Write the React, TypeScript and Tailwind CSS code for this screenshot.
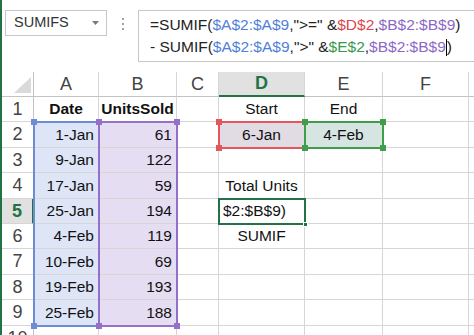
import clsx from 'clsx'

const GRID_COLS = 'grid-cols-[32px_65px_78px_42px_86px_78px_86px_1fr]'
const GRID_ROWS = 'grid-rows-[25px_25px_26px_25px_26px_25px_25px_26px_25px_26px_25px]'

type Align = 'left' | 'center' | 'right'
interface CellData {
  text?: string
  align?: Align
  bold?: boolean
  bg?: string
}

const BLUE_BG = 'bg-[#dde5f7]'
const PURPLE_BG = 'bg-[#e5ddf2]'

// sheet rows 1..10, columns A..G
const sheet: CellData[][] = [
  [
    { text: 'Date', align: 'center', bold: true },
    { text: 'UnitsSold', align: 'center', bold: true },
    {},
    { text: 'Start', align: 'center' },
    { text: 'End', align: 'center' },
    {},
    {},
  ],
  [
    { text: '1-Jan', align: 'right', bg: BLUE_BG },
    { text: '61', align: 'right', bg: PURPLE_BG },
    {},
    { text: '6-Jan', align: 'center', bg: 'bg-[#e1dce3]' },
    { text: '4-Feb', align: 'center', bg: 'bg-[#d6e4e2]' },
    {},
    {},
  ],
  [
    { text: '9-Jan', align: 'right', bg: BLUE_BG },
    { text: '122', align: 'right', bg: PURPLE_BG },
    {}, {}, {}, {}, {},
  ],
  [
    { text: '17-Jan', align: 'right', bg: BLUE_BG },
    { text: '59', align: 'right', bg: PURPLE_BG },
    {},
    { text: 'Total Units', align: 'center' },
    {}, {}, {},
  ],
  [
    { text: '25-Jan', align: 'right', bg: BLUE_BG },
    { text: '194', align: 'right', bg: PURPLE_BG },
    {},
    { text: '$2:$B$9)', align: 'left' },
    {}, {}, {},
  ],
  [
    { text: '4-Feb', align: 'right', bg: BLUE_BG },
    { text: '119', align: 'right', bg: PURPLE_BG },
    {},
    { text: 'SUMIF', align: 'center' },
    {}, {}, {},
  ],
  [
    { text: '10-Feb', align: 'right', bg: BLUE_BG },
    { text: '69', align: 'right', bg: PURPLE_BG },
    {}, {}, {}, {}, {},
  ],
  [
    { text: '19-Feb', align: 'right', bg: BLUE_BG },
    { text: '193', align: 'right', bg: PURPLE_BG },
    {}, {}, {}, {}, {},
  ],
  [
    { text: '25-Feb', align: 'right', bg: BLUE_BG },
    { text: '188', align: 'right', bg: PURPLE_BG },
    {}, {}, {}, {}, {},
  ],
  [{}, {}, {}, {}, {}, {}, {}],
]

// G is only a sliver at the right edge, so its letter is not shown
const letters = ['A', 'B', 'C', 'D', 'E', 'F', '']

function Cell({ text, align = 'left', bold, bg }: CellData) {
  return (
    <div
      className={clsx(
        'flex items-center whitespace-nowrap border-r border-b border-[#d6d6d6] px-[4px] text-[15.5px] text-[#111]',
        align === 'right' && 'justify-end',
        align === 'center' && 'justify-center',
        align === 'left' && 'justify-start',
        bold && 'font-bold',
        bg
      )}
    >
      {text}
    </div>
  )
}

function Handle({ pos, color }: { pos: 'tl' | 'tr' | 'bl' | 'br'; color: string }) {
  return (
    <span
      className={clsx(
        'absolute h-[6px] w-[6px]',
        pos === 'tl' && '-left-[4px] -top-[4px]',
        pos === 'tr' && '-right-[4px] -top-[4px]',
        pos === 'bl' && '-left-[4px] -bottom-[4px]',
        pos === 'br' && '-right-[4px] -bottom-[4px]',
        color
      )}
    />
  )
}

function FormulaBar() {
  const blue = 'text-[#4f7fd8]'
  const red = 'text-[#e0454b]'
  const purple = 'text-[#8b68c6]'
  const green = 'text-[#36984a]'
  return (
    <div className="flex h-[72px] shrink-0 items-start pt-[10px]">
      {/* name box */}
      <div className="ml-[3px] flex h-[26px] w-[102px] items-center justify-between border border-[#c6c6c6] pl-[8px] pr-[7px] text-[14.5px] text-[#333]">
        <span>SUMIFS</span>
        <svg width="7" height="4" viewBox="0 0 7 4">
          <path d="M0 0h7L3.5 4z" fill="#7a7a7a" />
        </svg>
      </div>
      {/* dots */}
      <div className="flex w-[31px] flex-col items-center gap-[3px] pt-[8px]">
        <span className="h-[2px] w-[2px] bg-[#a0a0a0]" />
        <span className="h-[2px] w-[2px] bg-[#a0a0a0]" />
        <span className="h-[2px] w-[2px] bg-[#a0a0a0]" />
      </div>
      {/* formula */}
      <div className="h-[52px] flex-1 border-y border-l border-[#c6c6c6] pl-[11px] pt-[3px] text-[15.5px] leading-[22px] text-[#222]">
        <div className="whitespace-nowrap">
          =SUMIF(<span className={blue}>$A$2:$A$9</span>,"&gt;=" &amp;
          <span className={red}>$D$2</span>,<span className={purple}>$B$2:$B$9</span>)
        </div>
        <div className="flex items-center whitespace-nowrap">
          <span>
            - SUMIF(<span className={blue}>$A$2:$A$9</span>,"&gt;" &amp;
            <span className={green}>$E$2</span>,<span className={purple}>$B$2:$B$9</span>
          </span>
          <span className="h-[17px] w-px bg-black" />
          <span>)</span>
        </div>
      </div>
    </div>
  )
}

function Sheet() {
  return (
    <div className="relative shrink-0">
      <div className={clsx('grid', GRID_COLS, GRID_ROWS)}>
        {/* corner */}
        <div className="relative border-r border-b border-[#c3c3c3]">
          <svg className="absolute right-[2px] bottom-[3px]" width="17" height="16" viewBox="0 0 17 16">
            <path d="M17 0v16H0z" fill="#dadada" />
          </svg>
        </div>
        {letters.map((l, k) =>
          l === 'D' ? (
            <div
              key={k}
              className="flex items-center justify-center border-r border-b-2 border-r-[#d6d6d6] border-b-[#217346] bg-[#e1e1e1] text-[18px] font-bold text-[#217346]"
            >
              {l}
            </div>
          ) : (
            <div
              key={k}
              className="flex items-center justify-center border-r border-b border-r-[#d6d6d6] border-b-[#c3c3c3] text-[18px] text-[#444]"
            >
              {l}
            </div>
          )
        )}
        {sheet.map((row, i) => (
          <div key={i} className="contents">
            {i === 4 ? (
              <div className="flex items-center justify-center border-r-2 border-b border-r-[#217346] border-b-[#d6d6d6] bg-[#e1e1e1] text-[18px] font-bold text-[#217346]">
                {i + 1}
              </div>
            ) : (
              <div className="flex items-center justify-center border-r border-b border-r-[#c3c3c3] border-b-[#d6d6d6] text-[18px] text-[#444]">
                {i + 1}
              </div>
            )}
            {row.map((c, j) => (
              <Cell key={j} {...c} />
            ))}
          </div>
        ))}
      </div>

      {/* range highlights */}
      <div className={clsx('pointer-events-none absolute inset-0 grid', GRID_COLS, GRID_ROWS)}>
        <div className="relative col-start-2 row-start-3 row-span-8 -m-px border-2 border-[#6e8bd6]">
          <Handle pos="tl" color="bg-[#6e8bd6]" />
          <Handle pos="bl" color="bg-[#6e8bd6]" />
        </div>
        <div className="relative col-start-3 row-start-3 row-span-8 -m-px border-2 border-[#9470c8]">
          <Handle pos="tl" color="bg-[#9470c8]" />
          <Handle pos="tr" color="bg-[#9470c8]" />
          <Handle pos="bl" color="bg-[#9470c8]" />
          <Handle pos="br" color="bg-[#9470c8]" />
        </div>
        <div className="relative col-start-5 row-start-3 -m-px border-2 border-[#e2565c]">
          <Handle pos="tl" color="bg-[#e2565c]" />
          <Handle pos="bl" color="bg-[#e2565c]" />
        </div>
        <div className="relative col-start-6 row-start-3 -m-px border-2 border-[#3f9d4c]">
          <Handle pos="tl" color="bg-[#3f9d4c]" />
          <Handle pos="tr" color="bg-[#3f9d4c]" />
          <Handle pos="bl" color="bg-[#3f9d4c]" />
          <Handle pos="br" color="bg-[#3f9d4c]" />
        </div>
        <div className="relative col-start-5 row-start-6 -m-px border-2 border-[#217346]">
          <span className="absolute -right-[4px] -bottom-[4px] h-[5px] w-[5px] border border-white bg-[#217346]" />
        </div>
      </div>
    </div>
  )
}

export default function App() {
  return (
    <div
      className="flex h-[335px] w-[474px] overflow-hidden bg-white"
      style={{ fontFamily: '"Liberation Sans", Arial, sans-serif' }}
    >
      <div className="w-[2px] shrink-0 bg-[#217346]" />
      <div className="flex min-w-0 flex-1 flex-col">
        <FormulaBar />
        <Sheet />
      </div>
    </div>
  )
}
